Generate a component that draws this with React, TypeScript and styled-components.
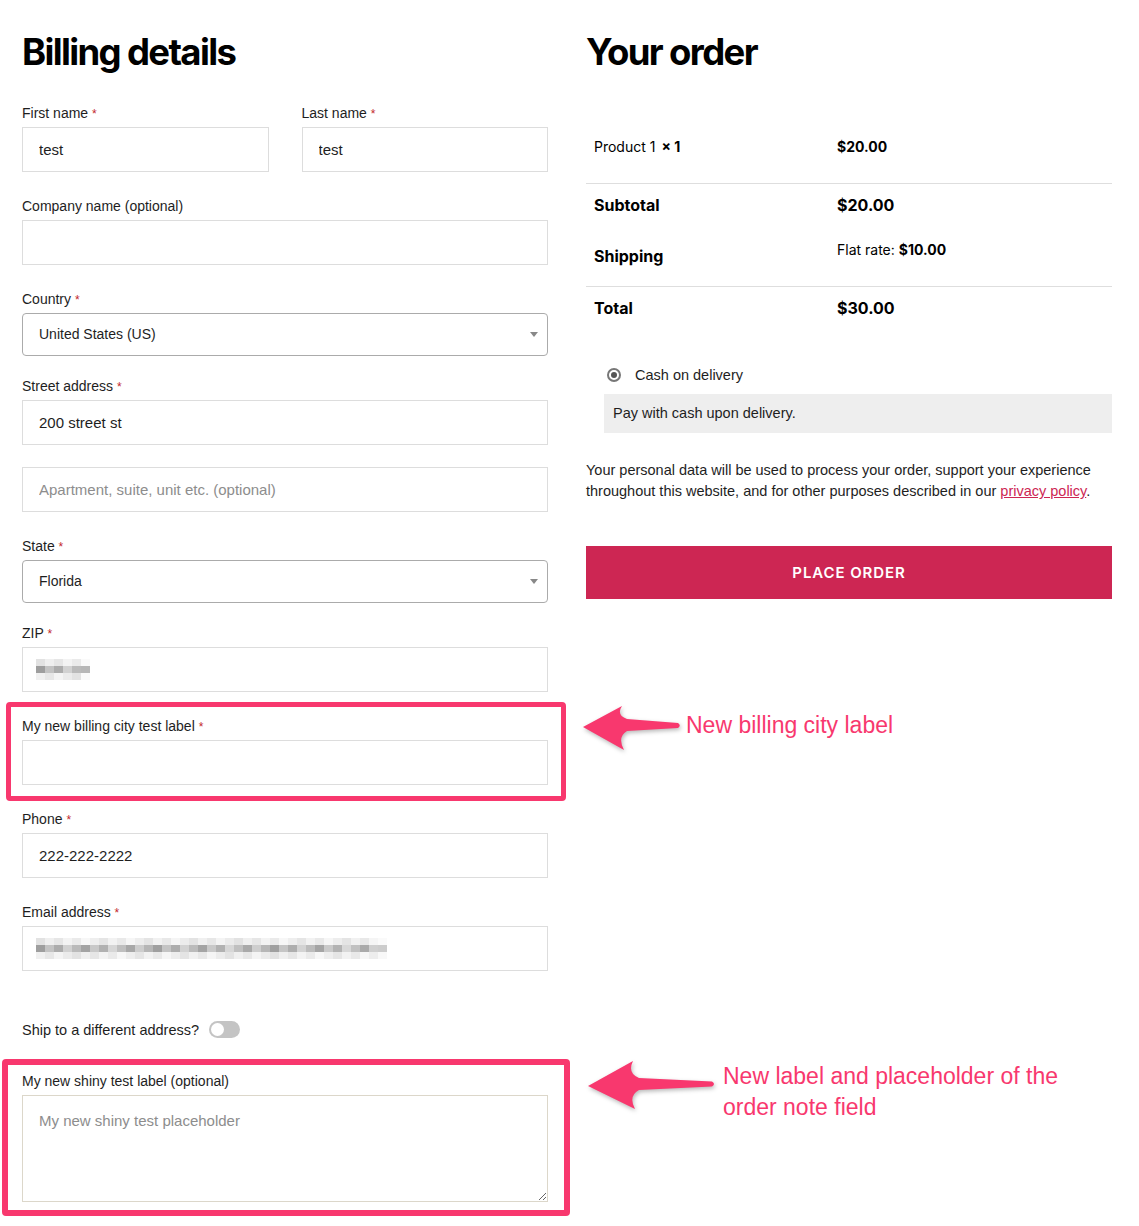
import React from 'react';
import styled, { createGlobalStyle } from 'styled-components';

const PINK = '#f8386e';
const ACCENT = '#cd2653';

const GlobalStyle = createGlobalStyle`
	* { box-sizing: border-box; }
	body {
		margin: 0;
		background: #fff;
		color: #1e1e1e;
		font-family: 'Liberation Sans', Arial, sans-serif;
	}
`;

const Page = styled.div`
	display: grid;
	grid-template-columns: 526px 526px;
	column-gap: 38px;
	align-items: start;
	padding: 31px 22px 20px;
	width: 1139px;
`;

const Column = styled.section`
	display: flex;
	flex-direction: column;
	position: relative;
`;

const Heading = styled.h2`
	margin: 0 0 28px;
	font-family: Inter, 'Noto Sans', sans-serif;
	font-size: 36.5px;
	font-weight: 700;
	line-height: 1.2;
	letter-spacing: -0.045em;
	color: #000;
`;

const NameRow = styled.div`
	display: grid;
	grid-template-columns: 1fr 1fr;
	column-gap: 33px;
`;

const Field = styled.div<{ $gap?: number }>`
	position: relative;
	display: flex;
	flex-direction: column;
	margin-bottom: ${(p) => p.$gap ?? 24}px;
`;

const Label = styled.label`
	display: block;
	height: 20px;
	font-size: 14px;
	line-height: 20px;
	margin-bottom: 4px;
	color: #1e1e1e;
`;

const Req = styled.abbr`
	color: #c3272c;
	text-decoration: none;
	border: 0;
	font-size: 12px;
	line-height: 0;
`;

const TextInput = styled.input`
	height: 45px;
	width: 100%;
	border: 1px solid #dddddd;
	border-radius: 0;
	padding: 0 16px;
	font: 15px 'Liberation Sans', Arial, sans-serif;
	color: #1e1e1e;
	background: #fff;
	outline: none;

	&::placeholder {
		color: #8d8d8d;
	}
`;

const InputBox = styled.div`
	height: 45px;
	border: 1px solid #dddddd;
	padding: 0 13px;
	display: flex;
	align-items: center;
`;

const Select = styled.div`
	height: 43px;
	border: 1px solid #ababab;
	border-radius: 4px;
	padding: 0 9px 0 16px;
	display: flex;
	align-items: center;
	justify-content: space-between;
	font-size: 14px;
	color: #1e1e1e;
`;

const Caret = styled.span`
	width: 0;
	height: 0;
	border-left: 4px solid transparent;
	border-right: 4px solid transparent;
	border-top: 5px solid #888;
`;

const Mosaic = styled.div<{ $cols: number }>`
	display: grid;
	grid-template-columns: repeat(${(p) => p.$cols}, 9px);
	grid-auto-rows: 7px;
`;

const Pixel = styled.span<{ $shade: number }>`
	background: rgb(${(p) => `${p.$shade},${p.$shade},${p.$shade}`});
`;

const TextArea = styled.textarea`
	display: block;
	height: 107px;
	width: 100%;
	border: 1px solid #dcd7ca;
	padding: 15px 16px;
	font: 15px/20px 'Liberation Sans', Arial, sans-serif;
	color: #1e1e1e;
	outline: none;
	resize: vertical;

	&::placeholder {
		color: #8d8d8d;
	}
`;

const ShipRow = styled.div`
	display: flex;
	align-items: center;
	gap: 10px;
	height: 20px;
	font-size: 14.5px;
	line-height: 20px;
	margin: 49px 0 31px;
`;

const Toggle = styled.span`
	width: 31px;
	height: 17px;
	border-radius: 9px;
	background: #c4c4c4;
	display: flex;
	align-items: center;
	padding: 0 2px;

	&::after {
		content: '';
		width: 13px;
		height: 13px;
		border-radius: 50%;
		background: #fff;
	}
`;

/* annotation overlays */
const Highlight = styled.span<{ $t: number; $r: number; $b: number; $l: number; $w: number }>`
	position: absolute;
	top: ${(p) => -p.$t}px;
	right: ${(p) => -p.$r}px;
	bottom: ${(p) => -p.$b}px;
	left: ${(p) => -p.$l}px;
	border: ${(p) => p.$w}px solid ${PINK};
	border-radius: 4px;
	pointer-events: none;
`;

const Note = styled.div<{ $top: number; $left: number; $gap: number }>`
	position: absolute;
	top: ${(p) => p.$top}px;
	left: ${(p) => p.$left}px;
	display: flex;
	align-items: flex-start;
	gap: ${(p) => p.$gap}px;
`;

const NoteText = styled.div<{ $offset: number; $lh: number }>`
	margin-top: ${(p) => p.$offset}px;
	font-size: 23px;
	line-height: ${(p) => p.$lh}px;
	color: ${PINK};
	white-space: nowrap;
`;

const ArrowSvg = styled.svg`
	flex: none;
	filter: drop-shadow(1px 2px 2px rgba(0, 0, 0, 0.28));
`;

/* order column */
const OrderTable = styled.table`
	width: 100%;
	border-collapse: collapse;
	margin-top: 8px;
	font-family: Inter, 'Noto Sans', sans-serif;
	color: #000;
`;

const Row = styled.tr<{ $border?: boolean }>`
	border-bottom: ${(p) => (p.$border ? '1px solid #dedede' : '0')};
`;

const Cell = styled.td<{ $big?: boolean; $bold?: boolean; $pad: string; $top?: boolean; $h?: number }>`
	padding: ${(p) => p.$pad};
	height: ${(p) => (p.$h ? `${p.$h}px` : 'auto')};
	font-size: ${(p) => (p.$big ? 16 : 14)}px;
	font-weight: ${(p) => (p.$bold ? 700 : 400)};
	line-height: ${(p) => (p.$top ? 18 : 20)}px;
	vertical-align: ${(p) => (p.$top ? 'top' : 'middle')};
	text-align: left;
	&:first-child {
		width: 243px;
	}
`;

const Qty = styled.strong`
	font-weight: 700;
	margin-left: 6px;
`;

const Payment = styled.div`
	margin-top: 38px;
	padding-left: 18px;
`;

const Method = styled.label`
	display: flex;
	align-items: center;
	gap: 14px;
	padding-left: 3px;
	font-size: 14.5px;
	line-height: 18px;
`;

const Radio = styled.span`
	width: 14px;
	height: 14px;
	border-radius: 50%;
	border: 2px solid #777;
	display: flex;
	align-items: center;
	justify-content: center;

	&::after {
		content: '';
		width: 6px;
		height: 6px;
		border-radius: 50%;
		background: #555;
	}
`;

const PayBox = styled.div`
	margin-top: 10px;
	background: #eeeeee;
	padding: 10px 9px;
	font-size: 14.5px;
	line-height: 19px;
`;

const Privacy = styled.p`
	margin: 27px 0 0;
	font-size: 14.5px;
	line-height: 21px;

	a {
		color: ${ACCENT};
		text-decoration: underline;
	}
`;

const PlaceOrder = styled.button`
	margin-top: 44px;
	height: 53px;
	width: 100%;
	border: 0;
	background: ${ACCENT};
	color: #fff;
	font-family: Inter, 'Noto Sans', sans-serif;
	font-size: 15px;
	font-weight: 600;
	letter-spacing: 0.06em;
	text-transform: uppercase;
`;

function Required() {
	return <Req title="required">*</Req>;
}

function Blurred(props: { cols: number }) {
	const cells: number[] = [];
	for (let r = 0; r < 3; r++) {
		for (let c = 0; c < props.cols; c++) {
			const fade = c >= props.cols - 1 ? 20 : 0;
			if (r === 1) cells.push(Math.min(245, 158 + ((c * 37) % 60) + fade));
			else cells.push(Math.min(250, 226 + ((c * 13 + r * 7) % 22) + fade));
		}
	}
	return (
		<Mosaic $cols={props.cols}>
			{cells.map((s, i) => (
				<Pixel key={i} $shade={s} />
			))}
		</Mosaic>
	);
}

function SmallArrow() {
	return (
		<ArrowSvg width="100" height="46" viewBox="0 0 100 46">
			<path d="M1,22 L40,1 Q34,10 45,14 L96,18 Q99.5,20.5 96,23 L45,26 Q35,32 42,45 Z" fill={PINK} />
		</ArrowSvg>
	);
}

function LongArrow() {
	return (
		<ArrowSvg width="130" height="50" viewBox="0 0 130 50">
			<path d="M1,26 L46,1 Q40,13 52,18 L125,21.5 Q129,24 125,26.5 L52,30 Q41,36 48,49 Z" fill={PINK} />
		</ArrowSvg>
	);
}

export default function App() {
	return (
		<>
			<GlobalStyle />
			<Page>
				<Column>
					<Heading>Billing details</Heading>
					<NameRow>
						<Field>
							<Label>
								First name <Required />
							</Label>
							<TextInput readOnly defaultValue="test" />
						</Field>
						<Field>
							<Label>
								Last name <Required />
							</Label>
							<TextInput readOnly defaultValue="test" />
						</Field>
					</NameRow>
					<Field>
						<Label>Company name (optional)</Label>
						<TextInput readOnly />
					</Field>
					<Field $gap={20}>
						<Label>
							Country <Required />
						</Label>
						<Select>
							United States (US)
							<Caret />
						</Select>
					</Field>
					<Field $gap={22}>
						<Label>
							Street address <Required />
						</Label>
						<TextInput readOnly defaultValue="200 street st" />
					</Field>
					<Field>
						<TextInput readOnly placeholder="Apartment, suite, unit etc. (optional)" />
					</Field>
					<Field $gap={20}>
						<Label>
							State <Required />
						</Label>
						<Select>
							Florida
							<Caret />
						</Select>
					</Field>
					<Field>
						<Label>
							ZIP <Required />
						</Label>
						<InputBox>
							<Blurred cols={6} />
						</InputBox>
					</Field>
					<Field>
						<Label>
							My new billing city test label <Required />
						</Label>
						<TextInput readOnly />
						<Highlight $t={14} $r={18} $b={16} $l={16} $w={5} />
						<Note $top={-11} $left={560} $gap={4}>
							<SmallArrow />
							<NoteText $offset={6} $lh={28}>
								New billing city label
							</NoteText>
						</Note>
					</Field>
					<Field>
						<Label>
							Phone <Required />
						</Label>
						<TextInput readOnly defaultValue="222-222-2222" />
					</Field>
					<Field $gap={0}>
						<Label>
							Email address <Required />
						</Label>
						<InputBox>
							<Blurred cols={39} />
						</InputBox>
					</Field>
					<ShipRow>
						Ship to a different address?
						<Toggle />
					</ShipRow>
					<Field $gap={0}>
						<Label>My new shiny test label (optional)</Label>
						<TextArea placeholder="My new shiny test placeholder" />
						<Highlight $t={12} $r={22} $b={14} $l={20} $w={6} />
						<Note $top={-11} $left={565} $gap={6}>
							<LongArrow />
							<NoteText $offset={1} $lh={31}>
								New label and placeholder of the
								<br />
								order note field
							</NoteText>
						</Note>
					</Field>
				</Column>

				<Column>
					<Heading>Your order</Heading>
					<OrderTable>
						<tbody>
							<Row $border>
								<Cell $pad="26px 8px">
									Product 1<Qty>× 1</Qty>
								</Cell>
								<Cell $pad="26px 8px" $bold>
									$20.00
								</Cell>
							</Row>
							<Row>
								<Cell $pad="11px 8px 10px" $big $bold>
									Subtotal
								</Cell>
								<Cell $pad="11px 8px 10px" $big $bold>
									$20.00
								</Cell>
							</Row>
							<Row $border>
								<Cell $pad="0 8px" $big $bold $h={62}>
									Shipping
								</Cell>
								<Cell $pad="16px 8px 0" $top>
									Flat rate: <strong>$10.00</strong>
								</Cell>
							</Row>
							<Row>
								<Cell $pad="11px 8px 10px" $big $bold>
									Total
								</Cell>
								<Cell $pad="11px 8px 10px" $big $bold>
									$30.00
								</Cell>
							</Row>
						</tbody>
					</OrderTable>
					<Payment>
						<Method>
							<Radio />
							Cash on delivery
						</Method>
						<PayBox>Pay with cash upon delivery.</PayBox>
					</Payment>
					<Privacy>
						Your personal data will be used to process your order, support your experience throughout this
						website, and for other purposes described in our <a href="#privacy">privacy policy</a>.
					</Privacy>
					<PlaceOrder>Place order</PlaceOrder>
				</Column>
			</Page>
		</>
	);
}
